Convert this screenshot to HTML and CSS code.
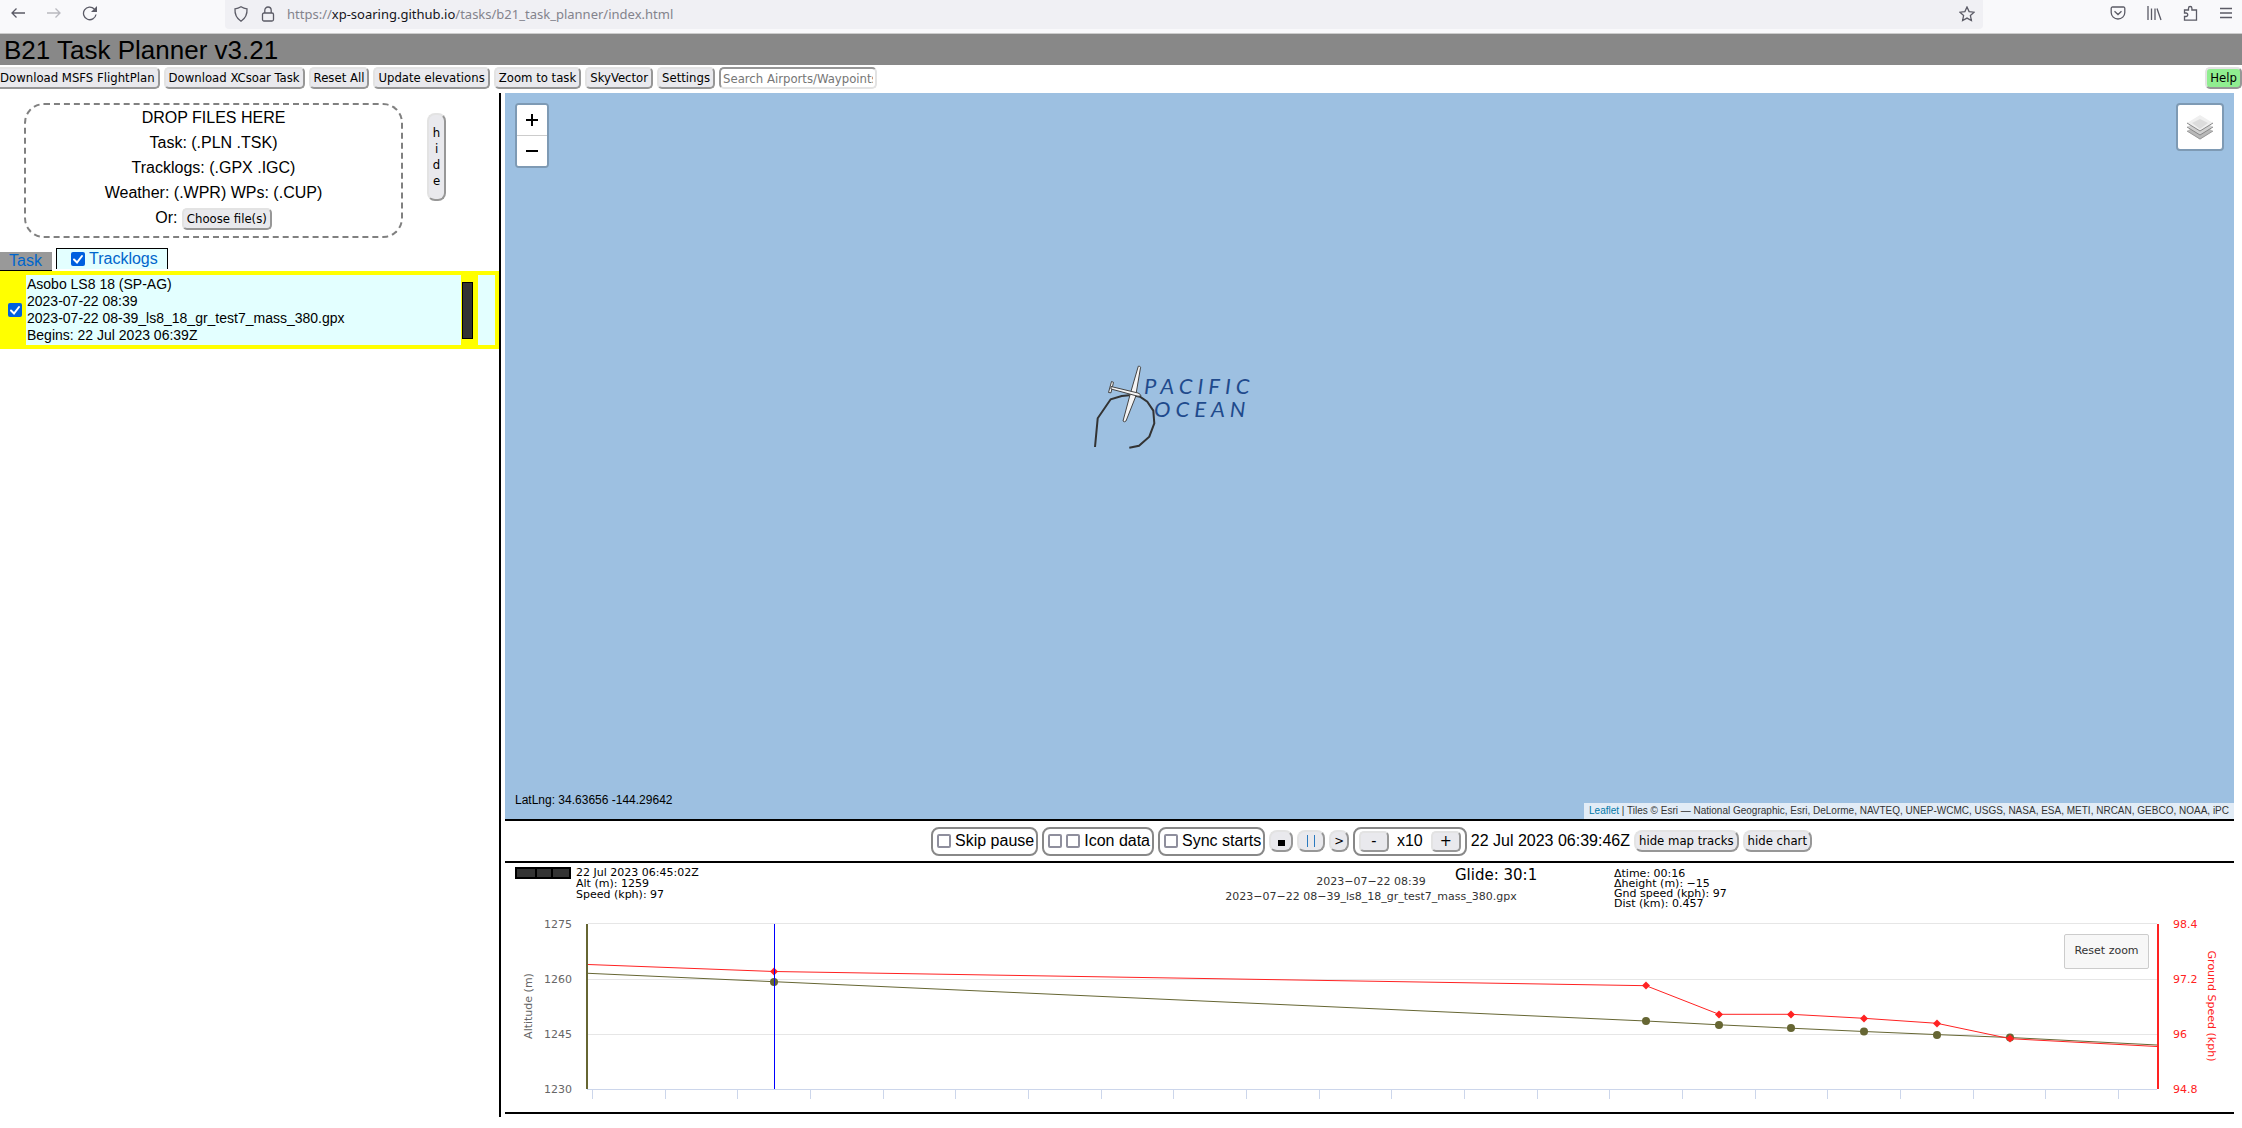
FILE: index.html
```html
<!DOCTYPE html>
<html lang="en">
<head>
<meta charset="utf-8">
<title>B21 Task Planner v3.21</title>
<link rel="stylesheet" href="styles.css">
</head>
<body>
<nav class="browser" aria-label="Browser">
  <div class="browser-nav">
    <svg class="ico" viewBox="0 0 16 16"><path d="M15 8H2M6.500 3.500 2 8l4.500 4.500"/></svg>
    <svg class="ico faded" viewBox="0 0 16 16"><path d="M1 8h13M9.500 3.500 14 8l-4.500 4.500"/></svg>
    <svg class="ico" viewBox="0 0 16 16"><path d="M14 9.500A6.300 6.300 0 1 1 12.300 4"/><path fill="#5b5b66" stroke="none" d="M15 1v6H9z"/></svg>
  </div>
  <div class="urlbar">
    <svg class="ico" viewBox="0 0 16 16"><path d="M8 .8c2 1.300 4 1.900 6 2 .4 5.500-1.400 9.500-6 12.400C3.400 12.300 1.600 8.300 2 2.800c2-.1 4-.7 6-2z"/></svg>
    <svg class="ico" viewBox="0 0 16 16"><rect x="2.500" y="7" width="11" height="8" rx="1.500"/><path d="M4.800 7V4.200a3.200 3.200 0 0 1 6.400 0V7"/></svg>
    <span class="url">https://<b>xp-soaring.github.io</b>/tasks/b21_task_planner/index.html</span>
    <svg class="ico star" viewBox="0 0 16 16"><path d="m8 1 2.100 4.600 5 .6-3.700 3.400 1 5L8 12.100l-4.400 2.500 1-5L.9 6.200l5-.6z"/></svg>
  </div>
  <div class="browser-tools">
    <svg class="ico" viewBox="0 0 16 16"><path d="M2.500 2h11a1.300 1.300 0 0 1 1.300 1.300V7.500a6.800 6.500 0 0 1-13.600 0V3.300A1.300 1.300 0 0 1 2.500 2zM4.500 6.300 8 9.500l3.500-3.200"/></svg>
    <svg class="ico" viewBox="0 0 16 16"><path d="M2 1v14M5.500 3.500V15M9 3.500V15M11 3.500 15 15"/></svg>
    <svg class="ico" viewBox="0 0 16 16"><path d="M2.500 15.200V11.500H4a1.700 1.700 0 0 0 0-3.500H2.500V5h4V3.200a1.700 1.700 0 0 1 3.400 0V5h4.600v10.200z"/></svg>
    <svg class="ico" viewBox="0 0 16 16"><path d="M2 3.500h12M2 8h12M2 12.500h12"/></svg>
  </div>
</nav>

<header class="title"><h1>B21 Task Planner v3.21</h1></header>

<div class="toolbar">
  <button class="btn">Download MSFS FlightPlan</button>
  <button class="btn">Download XCsoar Task</button>
  <button class="btn">Reset All</button>
  <button class="btn">Update elevations</button>
  <button class="btn">Zoom to task</button>
  <button class="btn">SkyVector</button>
  <button class="btn">Settings</button>
  <input class="search" type="text" placeholder="Search Airports/Waypoints" aria-label="Search Airports/Waypoints">
  <button class="btn help">Help</button>
</div>

<div class="workspace">
  <aside class="sidebar">
    <div class="drop-row">
      <div class="drop-zone">
        <p>DROP FILES HERE</p>
        <p>Task: (.PLN .TSK)</p>
        <p>Tracklogs: (.GPX .IGC)</p>
        <p>Weather: (.WPR) WPs: (.CUP)</p>
        <p>Or: <button class="btn">Choose file(s)</button></p>
      </div>
      <button class="btn hide-btn">h<br>i<br>d<br>e</button>
    </div>
    <div class="tabs">
      <a class="tab" href="#task">Task</a>
      <div class="tab tab-active"><input class="check" type="checkbox" id="all-logs" checked><label for="all-logs">Tracklogs</label></div>
    </div>
    <div class="log">
      <input class="check" type="checkbox" id="log-1" checked>
      <label class="log-text" for="log-1">Asobo LS8 18 (SP-AG)<br>2023-07-22 08:39<br>2023-07-22 08-39_ls8_18_gr_test7_mass_380.gpx<br>Begins: 22 Jul 2023 06:39Z</label>
      <span class="swatch"></span>
      <span class="log-end"></span>
    </div>
  </aside>

  <main class="main">
    <section class="map" aria-label="Map">
      <svg class="track" width="175" height="95" viewBox="0 0 175 95">
        <g class="ocean"><text x="54" y="29">PACIFIC</text><text x="64" y="52">OCEAN</text></g>
        <path class="trail" d="M5 82 7.700 53.300 20.700 34.300 31.700 31 41.700 30 50 31.700 57.300 36.700 63.300 45.700 64.300 58.300 59.300 71.700 49 80.700 39.300 82.700"/>
        <g class="glider">
          <path d="M48.300 1.200q1.800-.4 2.300 1L45.500 32 36 56q-1.500 1.500-3 0L40.500 28z"/>
          <path d="m21.500 16.500 2 .8-2.500 10.500-2.500-.3z"/>
          <path d="m21 21.500 27 6.500q2.500 1 3 2.700-2 .8-4 .3L21 24z"/>
        </g>
      </svg>
      <div class="zoom-ctl">
        <button aria-label="Zoom in"><svg width="14" height="14" viewBox="0 0 14 14"><path d="M7 1v12M1 7h12"/></svg></button>
        <button aria-label="Zoom out"><svg width="14" height="14" viewBox="0 0 14 14"><path d="M1 7h12"/></svg></button>
      </div>
      <button class="layers" aria-label="Layers">
        <svg width="26" height="26" viewBox="0 0 26 26">
          <path fill="#b8b8b8" d="M0 17 13 9l13 8-13 8.500z"/><path fill="none" stroke="#999" d="m0 17 13 8 13-8"/>
          <path fill="#d0d0d0" d="M0 13 13 5l13 8-13 8z"/><path fill="none" stroke="#888" d="m0 13 13 8 13-8"/>
          <path fill="#efefef" d="M0 9 13 1l13 8-13 8z"/><path fill="#dcdcdc" d="m5 9 8-4 8 4-8 6z"/><path fill="none" stroke="#888" d="m0 9 13 8 13-8"/>
        </svg>
      </button>
      <div class="latlng">LatLng: 34.63656 -144.29642</div>
      <div class="attribution"><a href="#leaflet">Leaflet</a> | Tiles © Esri — National Geographic, Esri, DeLorme, NAVTEQ, UNEP-WCMC, USGS, NASA, ESA, METI, NRCAN, GEBCO, NOAA, iPC</div>
    </section>

    <section class="controls">
      <div class="group"><input class="check" type="checkbox" id="skip"><label for="skip">Skip pause</label></div>
      <div class="group"><input class="check" type="checkbox" aria-label="Icon data 1"><input class="check" type="checkbox" id="icon"><label for="icon">Icon data</label></div>
      <div class="group"><input class="check" type="checkbox" id="sync"><label for="sync">Sync starts</label></div>
      <button class="btn round" aria-label="Stop"><span class="stop"></span></button>
      <button class="btn round pause" aria-label="Pause"><span class="bars"></span></button>
      <button class="btn round">&gt;</button>
      <div class="group speed"><button class="btn step">-</button><span>x10</span><button class="btn step">+</button></div>
      <span>22 Jul 2023 06:39:46Z</span>
      <button class="btn round">hide map tracks</button>
      <button class="btn round">hide chart</button>
    </section>

    <section class="chart">
      <svg viewBox="0 0 1729 249">
        <g class="legend">
          <rect x="10" y="4" width="56" height="12"/>
          <path fill="#333" d="M12 6h18v8H12zM32 6h14v8H32zM48 6h16v8H48z"/>
          <text x="71" y="13">22 Jul 2023 06:45:02Z</text>
          <text x="71" y="24">Alt (m): 1259</text>
          <text x="71" y="35">Speed (kph): 97</text>
          <text class="glide" x="950" y="17">Glide: 30:1</text>
          <text x="1109" y="14">Δtime: 00:16</text>
          <text x="1109" y="24">Δheight (m): −15</text>
          <text x="1109" y="34">Gnd speed (kph): 97</text>
          <text x="1109" y="44">Dist (km): 0.457</text>
        </g>
        <g class="heading"><text x="866" y="22">2023−07−22 08:39</text><text x="866" y="37">2023−07−22 08−39_ls8_18_gr_test7_mass_380.gpx</text></g>
        <path class="grid" d="M83 60.500H1652M83 116.500H1652M83 171.500H1652"/>
        <path class="axis" d="M82 226.500H1652M87.500 226v10M160.500 226v10M232.500 226v10M305.500 226v10M378.500 226v10M450.500 226v10M523.500 226v10M596.500 226v10M668.500 226v10M741.500 226v10M814.500 226v10M886.500 226v10M959.500 226v10M1032.500 226v10M1104.500 226v10M1177.500 226v10M1250.500 226v10M1322.500 226v10M1395.500 226v10M1468.500 226v10M1540.500 226v10M1613.500 226v10"/>
        <path fill="#663" d="M81 61h2v165h-2z"/>
        <path fill="#f22" d="M1652 61h2v165h-2z"/>
        <polyline class="alt" points="83,110.300 269,118.700 1141,158 1214,161.800 1286,165.200 1359,168.500 1432,171.600 1505,174.500 1652,182"/>
        <g fill="#663"><circle cx="269" cy="119" r="4"/><circle cx="1141" cy="158" r="4"/><circle cx="1214" cy="162" r="4"/><circle cx="1286" cy="165" r="4"/><circle cx="1359" cy="168.500" r="4"/><circle cx="1432" cy="172" r="4"/><circle cx="1505" cy="174.500" r="4"/></g>
        <polyline class="gs" points="83,101.500 269,108.500 1141,122.700 1214,151.300 1286,151.300 1359,155.300 1432,160.300 1505,175.700 1652,183.500"/>
        <path fill="#f22" d="m269 104.500 4 4-4 4-4-4zM1141 118.500l4 4-4 4-4-4zM1214 147.500l4 4-4 4-4-4zM1286 147.500l4 4-4 4-4-4zM1359 151.500l4 4-4 4-4-4zM1432 156.500l4 4-4 4-4-4zM1505 171.500l4 4-4 4-4-4z"/>
        <path stroke="#00f" d="M269.500 61v165"/>
        <g class="ticks-left"><text x="67" y="65">1275</text><text x="67" y="120">1260</text><text x="67" y="175">1245</text><text x="67" y="230">1230</text><text class="axis-title" transform="translate(27 143) rotate(-90)">Altitude (m)</text></g>
        <g class="ticks-right"><text x="1668" y="65">98.4</text><text x="1668" y="120">97.2</text><text x="1668" y="175">96</text><text x="1668" y="230">94.8</text><text class="axis-title" transform="translate(1703 143) rotate(90)">Ground Speed (kph)</text></g>
      </svg>
      <button class="reset">Reset zoom</button>
    </section>
  </main>
</div>
</body>
</html>
```
FILE: styles.css
```css
* { box-sizing: border-box; }
body {
  margin: 0;
  min-height: 100vh;
  display: flex;
  flex-direction: column;
  overflow-x: hidden;
  background: #fff;
  color: #000;
  font: 16px/18px "Liberation Sans", Arial, sans-serif;
}
p, h1 { margin: 0; font-weight: normal; }

/* browser bar */
.browser {
  display: flex;
  height: 34px;
  background: #f9f9fb;
  border-bottom: 1px solid #ccc;
}
.browser-nav { flex: none; width: 225px; display: flex; gap: 20px; padding: 5px 10px; }
.ico { flex: none; width: 16px; height: 16px; fill: none; stroke: #5b5b66; stroke-width: 1.3; }
.faded { opacity: .4; }
.urlbar {
  flex: 1;
  height: 29px;
  display: flex;
  align-items: center;
  gap: 11px;
  padding: 0 8px 2px;
  background: #f0f0f4;
  border-radius: 0 0 4px 4px;
}
.url { flex: 1; color: #83838c; font: 13px/18px "Noto Sans", sans-serif; }
.url b { color: #15141a; font-weight: normal; }
.browser-tools { flex: none; width: 259px; display: flex; justify-content: flex-end; gap: 20px; padding: 5px 8px; }

.title { height: 31px; padding-left: 4px; background: #888; }
.title h1 { font-size: 26px; line-height: 33px; }

/* buttons */
.btn {
  height: 22px;
  padding: 0 3px;
  border: 2px solid;
  border-color: #e3e3e3 #979797 #979797 #e3e3e3;
  border-radius: 5px;
  background: #e9e9ed;
  color: #000;
  font: 13px/16px "DejaVu Sans Condensed", "DejaVu Sans", sans-serif;
  white-space: nowrap;
}
.toolbar { display: flex; gap: 4px; height: 28px; padding-top: 2px; margin-left: -5px; }
.search {
  width: 158px;
  height: 22px;
  padding: 0 2px;
  border: 2px solid;
  border-color: #979797 #e3e3e3 #e3e3e3 #979797;
  border-radius: 5px;
  font: 13px/16px "DejaVu Sans Condensed", "DejaVu Sans", sans-serif;
}
.search::placeholder { color: #767676; }
.help { margin-left: auto; background: #90ee90; }

.check {
  appearance: none;
  flex: none;
  width: 14px;
  height: 14px;
  margin: 0;
  border: 2px solid #8f8f9d;
  border-radius: 2px;
  background: #fff;
}
.check:checked {
  border: 0;
  background: #0060df url("data:image/svg+xml,%3Csvg xmlns='http://www.w3.org/2000/svg' viewBox='0 0 14 14'%3E%3Cpath d='M3 7.500 6 10.500 11 4' fill='none' stroke='white' stroke-width='2' stroke-linecap='round'/%3E%3C/svg%3E");
}

.workspace { flex: 1; display: flex; padding: 0 8px 11px 0; }
.sidebar { flex: none; width: 501px; border-right: 2px solid #000; }
.main { flex: 1; min-width: 0; display: flex; flex-direction: column; padding: 0 0 3px 4px; }

/* sidebar */
.drop-row { display: flex; gap: 24px; padding: 10px 0 0 24px; }
.drop-zone {
  width: 379px;
  height: 135px;
  border: 2px dashed #808080;
  border-radius: 20px;
  text-align: center;
  line-height: 25px;
}
.hide-btn { height: 88px; width: 19px; margin-top: 10px; padding: 0; border-radius: 8px; }
.tabs { display: flex; gap: 4px; height: 33px; padding-top: 10px; }
.tab { color: #06c; text-decoration: none; }
a.tab { margin-top: 4px; width: 52px; height: 19px; padding-left: 9px; background: #999; border-bottom: 1px solid #000; }
.tab-active {
  display: flex;
  align-items: center;
  gap: 4px;
  width: 112px;
  height: 21px;
  padding-left: 14px;
  border: 1px solid #000;
  border-bottom: 0;
  background: #e3ffff;
}
.log { display: flex; align-items: center; height: 78px; padding: 4px; background: #ff0; }
.log .check { margin: 0 4px; }
.log-text { flex: 1; height: 70px; padding: 1px; background: #e3ffff; font-size: 14px; line-height: 17px; }
.swatch { width: 11px; height: 57px; margin: 0 5px 0 1px; background: #333; border: 1px solid #000; }
.log-end { width: 17px; height: 70px; background: #e3ffff; }

/* map */
.map { position: relative; flex: 1; min-height: 300px; background: #9dc0e1; border-bottom: 2px solid #000; }
.track { position: absolute; left: 585px; top: 272px; }
.ocean { fill: #1f4a8c; font: italic 22px Lato, sans-serif; letter-spacing: 5px; }
.trail { fill: none; stroke: #333; stroke-width: 2; }
.glider { fill: #f4f4f4; stroke: #444; stroke-width: 1; stroke-linejoin: round; }
.zoom-ctl, .layers { position: absolute; top: 10px; border: 2px solid #7e9ab4; border-radius: 4px; background: #fff; }
.zoom-ctl { left: 10px; display: flex; flex-direction: column; width: 34px; overflow: hidden; }
.zoom-ctl button { height: 30px; padding: 0; border: 0; background: #fff; display: grid; place-items: center; }
.zoom-ctl button:first-child { height: 31px; border-bottom: 1px solid #ccc; }
.zoom-ctl path { stroke: #000; stroke-width: 2; }
.layers { right: 10px; width: 48px; height: 48px; padding: 0; display: grid; place-items: center; }
.latlng { position: absolute; left: 10px; bottom: 10px; font-size: 12px; }
.attribution { position: absolute; right: 0; bottom: 0; padding: 0 5px; background: rgba(255, 255, 255, .7); color: #333; font-size: 10px; line-height: 16px; }
.attribution a { color: #0078a8; text-decoration: none; }

/* playback */
.controls { flex: none; display: flex; align-items: center; justify-content: center; gap: 4px; height: 42px; padding-left: 4px; border-bottom: 2px solid #000; white-space: nowrap; }
.group { display: flex; align-items: center; gap: 4px; height: 29px; padding: 0 2px 0 4px; border: 2px solid #888; border-radius: 8px; }
.round { border-radius: 8px; }
.stop { display: block; width: 7px; height: 6px; margin: 4px 3px 0 4px; background: #000; }
.bars { display: block; width: 8px; height: 12px; margin: 0 5px; border: solid #2a7ac0; border-width: 0 1px; }
.speed { gap: 8px; padding: 0 4px; }
.step { width: 30px; height: 21px; font-size: 16px; line-height: 14px; }

/* chart */
.chart { position: relative; flex: none; border-bottom: 2px solid #000; }
.chart svg { display: block; width: 100%; fill: none; font: 11px "DejaVu Sans", sans-serif; }
.legend { fill: #000; }
.chart .glide { font-size: 15px; }
.heading { fill: #333; text-anchor: middle; }
.grid { stroke: #e6e6e6; }
.axis { stroke: #ccd6eb; }
.alt { stroke: #663; }
.gs { stroke: #f22; }
.ticks-left { fill: #666; text-anchor: end; }
.ticks-right { fill: #f22; }
.axis-title { text-anchor: middle; }
.reset { position: absolute; right: 85px; top: 71px; width: 85px; height: 35px; padding: 0 0 2px; border: 1px solid #ccc; border-radius: 2px; background: #f7f7f7; color: #333; font: 11px "DejaVu Sans", sans-serif; }
```
